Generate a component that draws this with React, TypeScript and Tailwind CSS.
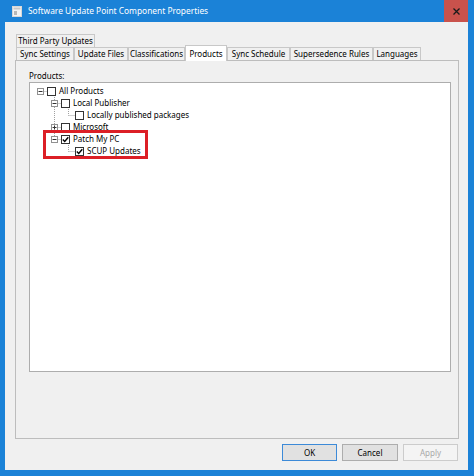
import React from "react";

type Node = {
  label: string;
  level: number;
  checked?: boolean;
  expand?: "open" | "closed";
  last: boolean;
  // for each ancestor column, whether a vertical guide continues through
  guides: boolean[];
};

const rows: Node[] = [
  { label: "All Products", level: 0, expand: "open", last: true, guides: [] },
  { label: "Local Publisher", level: 1, expand: "open", last: false, guides: [false] },
  { label: "Locally published packages", level: 2, last: true, guides: [false, true] },
  { label: "Microsoft", level: 1, expand: "closed", last: false, guides: [false] },
  { label: "Patch My PC", level: 1, expand: "open", checked: true, last: true, guides: [false] },
  { label: "SCUP Updates", level: 2, checked: true, last: true, guides: [false, false] },
];

const tabs = [
  { label: "Sync Settings", w: "w-[58px]" },
  { label: "Update Files", w: "w-[54px]" },
  { label: "Classifications", w: "w-[57px]" },
  { label: "Products", w: "w-[42px]", active: true },
  { label: "Sync Schedule", w: "w-[63px]" },
  { label: "Supersedence Rules", w: "w-[83px]" },
  { label: "Languages", w: "w-[48px]" },
];

const dot = { stroke: "#a0a0a0", strokeWidth: 1, strokeDasharray: "1 1" };

function GuideCell({ line }: { line: boolean }) {
  return (
    <svg width="14" height="12" className="shrink-0">
      {line && <line x1="7.5" y1="0" x2="7.5" y2="12" {...dot} />}
    </svg>
  );
}

function ConnectorCell({ node }: { node: Node }) {
  const root = node.level === 0;
  return (
    <svg width="14" height="12" className="shrink-0">
      {!root && <line x1="7.5" y1="0" x2="7.5" y2={node.last ? 6.5 : 12} {...dot} />}
      <line x1="7.5" y1="6.5" x2="14" y2="6.5" {...dot} />
      {node.expand && (
        <g>
          <rect x="4.5" y="3.5" width="6" height="6" fill="#fff" stroke="#919191" />
          <line x1="5.5" y1="6.5" x2="9.5" y2="6.5" stroke="#333" />
          {node.expand === "closed" && <line x1="7.5" y1="4.5" x2="7.5" y2="8.5" stroke="#333" />}
        </g>
      )}
    </svg>
  );
}

function Check({ checked }: { checked?: boolean }) {
  return (
    <div className="w-[9px] h-[9px] border border-[#333] bg-white flex items-center justify-center shrink-0">
      {checked && (
        <svg width="7" height="7" viewBox="0 0 7 7">
          <path d="M0.8 3.6 L2.7 5.5 L6.3 1.2" fill="none" stroke="#000" strokeWidth="1.4" />
        </svg>
      )}
    </div>
  );
}

function TreeRow({ node }: { node: Node }) {
  return (
    <div className="h-[12px] flex items-center">
      {node.guides.map((g, i) => (
        <GuideCell key={i} line={g} />
      ))}
      <ConnectorCell node={node} />
      <Check checked={node.checked} />
      <span className="ml-[3px] text-[8px] leading-[12px] text-black whitespace-nowrap">{node.label}</span>
    </div>
  );
}

function Button({ label, kind }: { label: string; kind: "default" | "normal" | "disabled" }) {
  const cls =
    kind === "default"
      ? "border-[#3c8ad8] bg-[#e1e1e1] text-black"
      : kind === "normal"
        ? "border-[#adadad] bg-[#e1e1e1] text-black"
        : "border-[#cccccc] bg-[#f4f4f4] text-[#a8a8a8]";
  return (
    <div className={`h-[17px] border flex items-center justify-center text-[8px] ${cls}`}>{label}</div>
  );
}

export default function App() {
  return (
    <div className="w-[474px] h-[476px] bg-[#1b82d7] flex flex-col font-['Noto_Sans',sans-serif]">
      {/* title bar */}
      <div className="h-[22px] flex items-center pl-[12px] pr-[6px] shrink-0">
        <svg width="10" height="11" viewBox="0 0 10 11" className="shrink-0">
          <rect x="0.5" y="0.5" width="9" height="10" fill="#f4f4f4" stroke="#d8d8d8" />
          <rect x="1.5" y="1.5" width="7" height="2" fill="#c8c8c8" />
          <rect x="2" y="5" width="3" height="4" fill="#b8b8b8" />
        </svg>
        <span className="ml-[6px] text-[8.4px] text-white whitespace-nowrap">
          Software Update Point Component Properties
        </span>
        <div className="flex-1" />
        <div className="w-[24px] h-[22px] bg-[#c9524c] flex items-center justify-center">
          <svg width="7" height="7" viewBox="0 0 7 7">
            <path d="M0.5 0.5 L6.5 6.5 M6.5 0.5 L0.5 6.5" stroke="#1a1a1a" strokeWidth="1.3" />
          </svg>
        </div>
      </div>

      {/* body */}
      <div className="flex-1 ml-[5px] mr-[6px] mb-[6px] bg-[#f0f0f0] flex flex-col pt-[12px] pl-[10px] pr-[9px]">
        {/* tabs */}
        <div className="pl-[1px] flex flex-col">
          <div className="flex">
            <div className="w-[79px] h-[13px] border border-b-0 border-[#c8c8c8] bg-[#f0f0f0] flex items-center justify-center text-[8px] text-black whitespace-nowrap">
              Third Party Updates
            </div>
          </div>
          <div className="flex items-end h-[13px] border-t border-[#c8c8c8] w-[79px] overflow-visible">
            <div className="flex items-end">
              {tabs.map((t) =>
                t.active ? (
                  <div
                    key={t.label}
                    className={`${t.w} h-[16px] -mb-px relative z-10 bg-white border border-b-0 border-[#c8c8c8] flex items-center justify-center text-[8px] text-black whitespace-nowrap shrink-0`}
                  >
                    {t.label}
                  </div>
                ) : (
                  <div
                    key={t.label}
                    className={`${t.w} h-[13px] border-t border-l border-r border-[#c8c8c8] bg-[#f0f0f0] flex items-center justify-center text-[8px] text-black whitespace-nowrap shrink-0`}
                  >
                    {t.label}
                  </div>
                ),
              )}
            </div>
          </div>
        </div>

        {/* panel */}
        <div className="h-[379px] border border-[#bdbdbd] bg-[#f0f0f0] pt-[9px] pl-[13px] pr-[7px] flex flex-col">
          <div className="h-[12px] text-[8px] leading-[12px] text-black">Products:</div>
          <div className="relative h-[290px] border border-[#adadad] bg-white pt-[2px] pl-[3px]">
            {rows.map((n) => (
              <TreeRow key={n.label} node={n} />
            ))}
            <div className="absolute left-[13px] top-[47px] w-[105px] h-[29px] border-[3px] border-[#dc1f26]" />
          </div>
        </div>

        {/* buttons */}
        <div className="flex justify-end gap-[5px] mt-[5px] pr-[1px]">
          <div className="w-[55px]">
            <Button label="OK" kind="default" />
          </div>
          <div className="w-[56px]">
            <Button label="Cancel" kind="normal" />
          </div>
          <div className="w-[55px]">
            <Button label="Apply" kind="disabled" />
          </div>
        </div>
      </div>
    </div>
  );
}
